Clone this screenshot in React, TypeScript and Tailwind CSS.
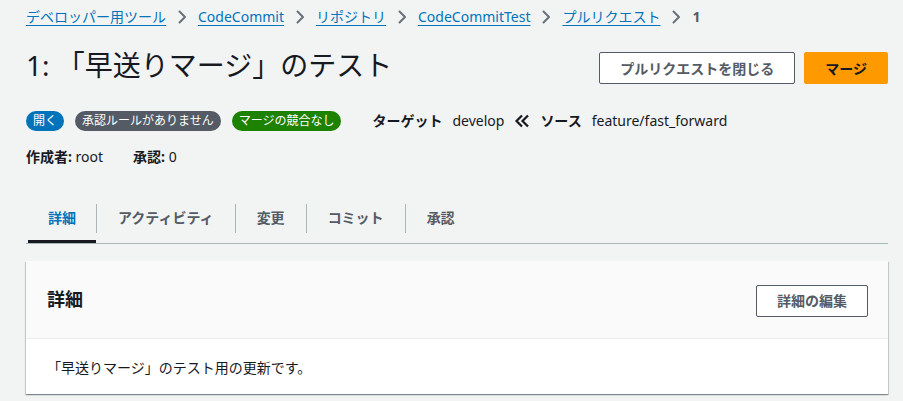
import React from 'react';

const crumbs = ['デベロッパー用ツール', 'CodeCommit', 'リポジトリ', 'CodeCommitTest', 'プルリクエスト'];

const tabs = ['詳細', 'アクティビティ', '変更', 'コミット', '承認'];

function Chevron() {
  return (
    <svg width="16" height="16" viewBox="0 0 16 16" fill="none" stroke="#687078" strokeWidth="2" strokeLinecap="round" strokeLinejoin="round">
      <path d="M5.5 2.5L11 8l-5.5 5.5" />
    </svg>
  );
}

function DoubleChevron() {
  return (
    <svg width="16" height="16" viewBox="0 0 16 16" fill="none" stroke="#16191f" strokeWidth="2.2" strokeLinejoin="miter">
      <path d="M8 2.5L2.5 8 8 13.5" />
      <path d="M14 2.5L8.5 8 14 13.5" />
    </svg>
  );
}

export default function App() {
  return (
    <div
      className="min-h-screen w-full bg-[#f2f3f3] pl-[26px] pr-[15px] text-[14px] text-[#16191f]"
      style={{ fontFamily: '"Noto Sans", "Noto Sans CJK JP", sans-serif' }}
    >
      {/* パンくず */}
      <nav className="flex items-center gap-2 pt-[7px] leading-5">
        {crumbs.map((c) => (
          <React.Fragment key={c}>
            <a className="text-[#0073bb] underline underline-offset-[3px] decoration-[#0073bb]">{c}</a>
            <Chevron />
          </React.Fragment>
        ))}
        <span className="font-bold text-[#545b64]">1</span>
      </nav>

      {/* タイトル */}
      <div className="mt-5 flex items-start justify-between">
        <h1 className="text-[28px] leading-9 font-normal">1: 「早送りマージ」のテスト</h1>
        <div className="mt-[5px] flex gap-[9px]">
          <button className="h-8 rounded-[2px] border border-[#545b64] bg-white px-5 font-bold text-[#545b64]">
            プルリクエストを閉じる
          </button>
          <button className="h-8 rounded-[2px] border border-[#ff9900] bg-[#ff9900] px-5 font-bold text-[#16191f]">
            マージ
          </button>
        </div>
      </div>

      {/* ステータス */}
      <div className="mt-[26px] flex items-center gap-[11px]">
        <span className="h-5 rounded-full bg-[#0073bb] px-[7px] text-[12px] leading-5 text-white">開く</span>
        <span className="h-5 rounded-full bg-[#545b64] px-[7px] text-[12px] leading-5 text-white">承認ルールがありません</span>
        <span className="h-5 rounded-full bg-[#1d8102] px-[7px] text-[12px] leading-5 text-white">マージの競合なし</span>
        <div className="ml-5 flex items-center gap-[10px]">
          <span className="font-bold">ターゲット</span>
          <span>develop</span>
          <DoubleChevron />
          <span className="font-bold">ソース</span>
          <span>feature/fast_forward</span>
        </div>
      </div>

      <div className="mt-4 flex gap-[30px] leading-5">
        <span><b>作成者:</b> root</span>
        <span><b>承認:</b> 0</span>
      </div>

      {/* タブ */}
      <div className="mt-[27px] flex border-b border-[#aab7b8] pl-0.5">
        {tabs.map((t, i) => (
          <div key={t} className="flex items-center">
            {i > 0 && <div className="h-[29px] w-px bg-[#aab7b8]" />}
            <div className="flex flex-col">
              <div
                className={`flex h-[46px] items-center font-bold ${
                  i === 0 ? 'px-5 text-[#0073bb]' : 'px-[21px] text-[#545b64]'
                }`}
              >
                {t}
              </div>
              <div className={`h-[3px] ${i === 0 ? 'bg-[#16191f]' : 'bg-transparent'}`} />
            </div>
          </div>
        ))}
      </div>

      {/* 詳細カード */}
      <div className="mt-[17px] bg-white shadow-[0_1px_1px_0_rgba(0,28,36,0.3),1px_1px_1px_0_rgba(0,28,36,0.15),-1px_1px_1px_0_rgba(0,28,36,0.15)]">
        <div className="flex h-[78px] items-center justify-between border-b border-[#eaeded] bg-[#fafafa] pl-[21px] pr-5">
          <h2 className="text-[18px] font-bold">詳細</h2>
          <button className="mt-0.5 h-8 rounded-[2px] border border-[#545b64] bg-white px-5 font-bold text-[#545b64]">
            詳細の編集
          </button>
        </div>
        <div className="flex h-[55px] items-center pl-[21px] pt-[2px]">
          「早送りマージ」のテスト用の更新です。
        </div>
      </div>
    </div>
  );
}
